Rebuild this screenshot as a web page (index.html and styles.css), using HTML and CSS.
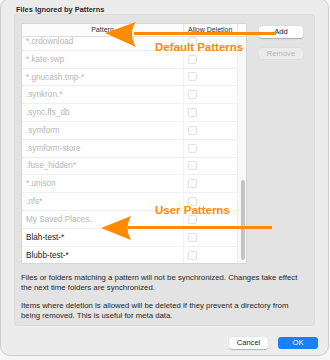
FILE: index.html
```html
<!DOCTYPE html>
<html>
<head>
<meta charset="utf-8">
<link rel="stylesheet" href="styles.css">
</head>
<body>
<div class="window">
  <div class="title">Files Ignored by Patterns</div>
  <div class="group">
    <div class="top">
      <div class="table">
        <div class="thead">
          <div class="th col-pattern">Pattern</div>
          <div class="th col-allow">Allow Deletion</div>
          <div class="th col-scroll"></div>
        </div>
        <div class="tbody">
          <div class="rows">
            <div class="row def"><div class="cell col-pattern">*.crdownload</div><div class="cell col-allow"><span class="cb"></span></div></div>
            <div class="row def"><div class="cell col-pattern">*.kate-swp</div><div class="cell col-allow"><span class="cb"></span></div></div>
            <div class="row def"><div class="cell col-pattern">*.gnucash.tmp-*</div><div class="cell col-allow"><span class="cb"></span></div></div>
            <div class="row def"><div class="cell col-pattern">.synkron.*</div><div class="cell col-allow"><span class="cb"></span></div></div>
            <div class="row def"><div class="cell col-pattern">.sync.ffs_db</div><div class="cell col-allow"><span class="cb"></span></div></div>
            <div class="row def"><div class="cell col-pattern">.symform</div><div class="cell col-allow"><span class="cb"></span></div></div>
            <div class="row def"><div class="cell col-pattern">.symform-store</div><div class="cell col-allow"><span class="cb"></span></div></div>
            <div class="row def"><div class="cell col-pattern">.fuse_hidden*</div><div class="cell col-allow"><span class="cb"></span></div></div>
            <div class="row def"><div class="cell col-pattern">*.unison</div><div class="cell col-allow"><span class="cb"></span></div></div>
            <div class="row def"><div class="cell col-pattern">.nfs*</div><div class="cell col-allow"><span class="cb"></span></div></div>
            <div class="row def"><div class="cell col-pattern">My Saved Places.</div><div class="cell col-allow"><span class="cb"></span></div></div>
            <div class="row user"><div class="cell col-pattern">Blah-test-*</div><div class="cell col-allow"><span class="cb"></span></div></div>
            <div class="row user last"><div class="cell col-pattern">Blubb-test-*</div><div class="cell col-allow"><span class="cb"></span></div></div>
          </div>
          <div class="scrolltrack"><div class="thumb"></div></div>
        </div>
      </div>
      <div class="side">
        <div class="btn">Add</div>
        <div class="btn disabled">Remove</div>
      </div>
    </div>
    <p class="desc first">Files or folders matching a pattern will not be synchronized. Changes take effect the next time folders are synchronized.</p>
    <p class="desc">Items where deletion is allowed will be deleted if they prevent a directory from being removed. This is useful for meta data.</p>
  </div>
  <div class="footer">
    <div class="btn wide">Cancel</div>
    <div class="btn wide primary">OK</div>
  </div>

  <svg class="annot" width="330" height="360" viewBox="0 0 330 360">
    <path d="M134 33.5 L276 33.5" stroke="#ff8b00" stroke-width="3.2" fill="none"/>
    <path d="M105 33 L136 22 Q128 33 136 47 Z" fill="#ff8b00"/>
    <path d="M128 227.5 L272 227.5" stroke="#ff8b00" stroke-width="3.2" fill="none"/>
    <path d="M101 228 L131 216 Q124 228 131 240 Z" fill="#ff8b00"/>
  </svg>
  <div class="label l-default">Default Patterns</div>
  <div class="label l-user">User Patterns</div>
</div>
</body>
</html>
```
FILE: styles.css
```css
html, body {
  margin: 0;
  padding: 0;
  background: #f6f6f6;
  font-family: "Liberation Sans", Arial, sans-serif;
  color: #1e1e1e;
}
.window {
  position: relative;
  box-sizing: border-box;
  width: 329px;
  height: 358px;
  margin-top: -2px;
  background: #ececec;
  border: 1px solid #cfcfcf;
  border-radius: 10px;
  display: flex;
  flex-direction: column;
  overflow: hidden;
}
.title {
  font-size: 7.4px;
  font-weight: bold;
  color: #2a2a2a;
  margin: 7px 0 0 15px;
  height: 8px;
  line-height: 8px;
}
.group {
  box-sizing: border-box;
  margin: 0 0 0 13px;
  width: 301px;
  height: 312px;
  background: #e3e3e3;
  border: 1px solid #dcdcdc;
  border-radius: 4px;
  padding: 8px 0 0 6px;
}
.top {
  display: flex;
  gap: 12px;
}
.table {
  box-sizing: border-box;
  width: 226px;
  height: 241px;
  background: #ffffff;
  border: 1px solid #d6d6d6;
  display: flex;
  flex-direction: column;
}
.thead {
  display: flex;
  height: 12px;
  border-bottom: 1px solid #dedede;
  background: #fcfcfc;
  flex: none;
}
.th {
  font-size: 7px;
  line-height: 12px;
  color: #303030;
  text-align: center;
}
.col-pattern { width: 161px; box-sizing: border-box; }
.col-allow { width: 54px; box-sizing: border-box; border-left: 1px solid #e6e6e6; }
.col-scroll { flex: 1; border-left: 1px solid #e6e6e6; }
.th.col-allow { text-align: left; padding-left: 4px; }
.tbody {
  flex: 1;
  display: flex;
  overflow: hidden;
}
.rows {
  width: 215px;
  margin-top: -4px;
}
.row {
  display: flex;
  height: 17.8px;
  box-sizing: border-box;
  border-bottom: 1px solid #f0f0f0;
}
.row.last { border-bottom: none; }
.cell {
  font-size: 8.2px;
  line-height: 17px;
  display: flex;
  align-items: center;
}
.cell.col-pattern { padding-left: 4px; }
.cell.col-allow { border-left-color: #f2f2f2; padding-left: 4px; }
.def .cell { color: #b5b5b5; }
.user .cell { color: #1c1c1c; }
.cb {
  display: block;
  width: 7px;
  height: 7px;
  border: 1px solid #e2e2e2;
  border-radius: 2px;
  background: #fdfdfd;
}
.scrolltrack {
  flex: 1;
  position: relative;
  background: #f9f9f9;
  border-left: 1px solid #eeeeee;
}
.thumb {
  position: absolute;
  left: 3px;
  width: 4px;
  top: 143px;
  height: 80px;
  border-radius: 2px;
  background: #c3c3c3;
}
.side {
  display: flex;
  flex-direction: column;
  gap: 10px;
  padding-top: 3px;
}
.btn {
  box-sizing: border-box;
  width: 44px;
  height: 12px;
  background: #ffffff;
  border-radius: 3px;
  box-shadow: 0 0.5px 1px rgba(0,0,0,0.25);
  font-size: 7.6px;
  line-height: 12px;
  text-align: center;
  color: #222;
}
.btn.disabled {
  height: 11px;
  line-height: 11px;
  background: #ebebeb;
  color: #b8b8b8;
  box-shadow: 0 0 0 0.5px #dadada;
}
.desc {
  margin: 8px 0 0 0;
  font-size: 7.8px;
  line-height: 10px;
  color: #262626;
  width: 288px;
}
.desc.first { margin-top: 9px; }
.footer {
  display: flex;
  justify-content: flex-end;
  gap: 10px;
  padding: 11px 10px 0 0;
}
.btn.wide { width: 39px; }
.btn.primary {
  width: 40px;
  background: #1c7ff6;
  color: #ffffff;
  box-shadow: none;
}
.annot {
  position: absolute;
  left: -1px;
  top: 1px;
  pointer-events: none;
}
.label {
  position: absolute;
  color: #ff8b00;
  font-weight: bold;
  font-size: 11.5px;
  line-height: 14px;
}
.l-default { left: 154px; top: 41px; }
.l-user { left: 154px; top: 204px; }
```
